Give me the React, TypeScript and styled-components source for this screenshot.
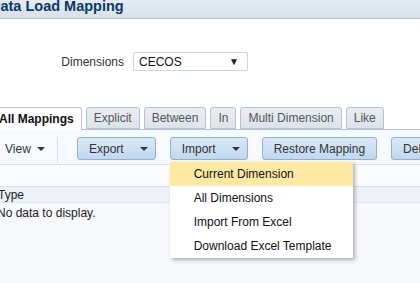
import styled, { createGlobalStyle } from "styled-components";

const GlobalStyle = createGlobalStyle`
  html, body {
    margin: 0;
    padding: 0;
    background: #f7f8fc;
    font-family: "Liberation Sans", Arial, sans-serif;
    font-size: 12px;
    color: #333;
    overflow: hidden;
  }
`;

const tabs = ["Explicit", "Between", "In", "Multi Dimension", "Like"];
const importItems = [
  "Current Dimension",
  "All Dimensions",
  "Import From Excel",
  "Download Excel Template",
];

const App = () => {
  return (
    <>
      <GlobalStyle />
      <Page>
        <Header>
          <Title>Data Load Mapping</Title>
        </Header>

        <Form>
          <FieldRow>
            <Label>Dimensions</Label>
            <Select>
              <span>CECOS</span>
              <SelectArrow>▼</SelectArrow>
            </Select>
          </FieldRow>
        </Form>

        <TabStrip>
          <Tab $active>All Mappings</Tab>
          {tabs.map((t) => (
            <Tab key={t}>{t}</Tab>
          ))}
        </TabStrip>

        <Toolbar>
          <ViewMenu>
            View <Caret />
          </ViewMenu>
          <Separator />
          <Buttons>
            <Button>
              Export <Caret />
            </Button>
            <MenuAnchor>
              <Button>
                Import <Caret />
              </Button>
              <Menu>
                {importItems.map((item, i) => (
                  <MenuItem key={item} $hover={i === 0}>
                    {item}
                  </MenuItem>
                ))}
              </Menu>
            </MenuAnchor>
            <Button>Restore Mapping</Button>
            <Button>Delete Mappings</Button>
          </Buttons>
        </Toolbar>

        <FilterRow />
        <ColumnHeader>
          <ColumnTitle>Type</ColumnTitle>
        </ColumnHeader>
        <EmptyText>No data to display.</EmptyText>
      </Page>
    </>
  );
};

const Page = styled.div`
  width: 420px;
  height: 283px;
  overflow: hidden;
  background: #f7f8fc;
`;

const Header = styled.div`
  height: 18px;
  background: linear-gradient(#e4ebf2, #d8e1ea);
  border-bottom: 1px solid #b8c5d2;
  overflow: hidden;
`;

const Title = styled.h1`
  margin: -3px 0 0 -10px;
  font-size: 14.5px;
  line-height: 18px;
  font-weight: 700;
  color: #0b3a5e;
  white-space: nowrap;
`;

const Form = styled.div`
  background: #fff;
  padding: 33px 0 36px;
`;

const FieldRow = styled.div`
  display: flex;
  align-items: center;
  gap: 9px;
`;

const Label = styled.label`
  width: 124px;
  text-align: right;
  color: #333;
`;

const Select = styled.div`
  width: 115px;
  height: 19px;
  box-sizing: border-box;
  display: flex;
  align-items: center;
  justify-content: space-between;
  padding: 0 8px 0 5px;
  border: 1px solid #cdd6e0;
  border-radius: 2px;
  background: #fff;
  color: #111;
`;

const SelectArrow = styled.span`
  font-size: 10px;
  color: #222;
`;

const TabStrip = styled.div`
  display: flex;
  align-items: flex-end;
  gap: 4px;
  height: 22px;
  margin-left: -9px;
  background: #fff;
  border-bottom: 1px solid #b7c3d0;
`;

const Tab = styled.div<{ $active?: boolean }>`
  flex-shrink: 0;
  height: ${(p) => (p.$active ? "23px" : "22px")};
  box-sizing: border-box;
  display: flex;
  align-items: center;
  padding: 0 7px;
  margin-bottom: ${(p) => (p.$active ? "-1px" : "0")};
  border: 1px solid #b7c3d0;
  border-bottom: ${(p) => (p.$active ? "none" : "1px solid #b7c3d0")};
  border-radius: 3px 3px 0 0;
  background: ${(p) =>
    p.$active ? "#fff" : "linear-gradient(#eaeef3, #dde3ea)"};
  color: ${(p) => (p.$active ? "#111" : "#555")};
  font-weight: ${(p) => (p.$active ? 700 : 400)};
  font-size: 12px;
  white-space: nowrap;
`;

const Toolbar = styled.div`
  display: flex;
  align-items: flex-start;
  height: 35px;
  box-sizing: border-box;
  padding-top: 7px;
  background: #f6f9fd;
  border-bottom: 1px solid #d8dfe7;
`;

const ViewMenu = styled.div`
  flex-shrink: 0;
  display: flex;
  align-items: center;
  gap: 6px;
  height: 23px;
  padding-left: 5px;
  width: 52px;
  color: #333;
`;

const Separator = styled.div`
  flex-shrink: 0;
  width: 1px;
  height: 26px;
  background: #d6dde6;
`;

const Buttons = styled.div`
  flex-shrink: 0;
  display: flex;
  gap: 14px;
  margin-left: 19px;
`;

const Caret = styled.span`
  display: inline-block;
  width: 0;
  height: 0;
  border-left: 4px solid transparent;
  border-right: 4px solid transparent;
  border-top: 4px solid #333;
`;

const Button = styled.button`
  flex-shrink: 0;
  display: flex;
  align-items: center;
  gap: 16px;
  height: 23px;
  padding: 0 7px 0 11px;
  margin: 0;
  border: 1px solid #93b1cf;
  border-radius: 3px;
  background: linear-gradient(#d9e8f6, #c2d7ee);
  font-family: inherit;
  font-size: 12px;
  color: #333;
  white-space: nowrap;

  &:not(:has(span)) {
    padding-right: 11px;
  }
`;

const MenuAnchor = styled.div`
  position: relative;
  flex-shrink: 0;
`;

const Menu = styled.ul`
  position: absolute;
  top: 25px;
  left: 0;
  width: 183px;
  margin: 0;
  padding: 0;
  list-style: none;
  background: #fff;
  box-shadow: 2px 2px 4px rgba(0, 0, 0, 0.3);
  z-index: 10;
`;

const MenuItem = styled.li<{ $hover?: boolean }>`
  height: 24px;
  line-height: 24px;
  padding-left: 24px;
  background: ${(p) => (p.$hover ? "#fde9a4" : "#fff")};
  color: #111;
  white-space: nowrap;
`;

const FilterRow = styled.div`
  height: 21px;
  background: #fafcfe;
  border-bottom: 1px solid #d8dfe7;
`;

const ColumnHeader = styled.div`
  height: 15px;
  display: flex;
  align-items: center;
  background: #eef2f8;
  border-bottom: 1px solid #e1e6ee;
`;

const ColumnTitle = styled.span`
  margin-left: -2px;
  color: #222;
`;

const EmptyText = styled.div`
  margin: 3px 0 0 -3px;
  color: #222;
`;

export default App;
